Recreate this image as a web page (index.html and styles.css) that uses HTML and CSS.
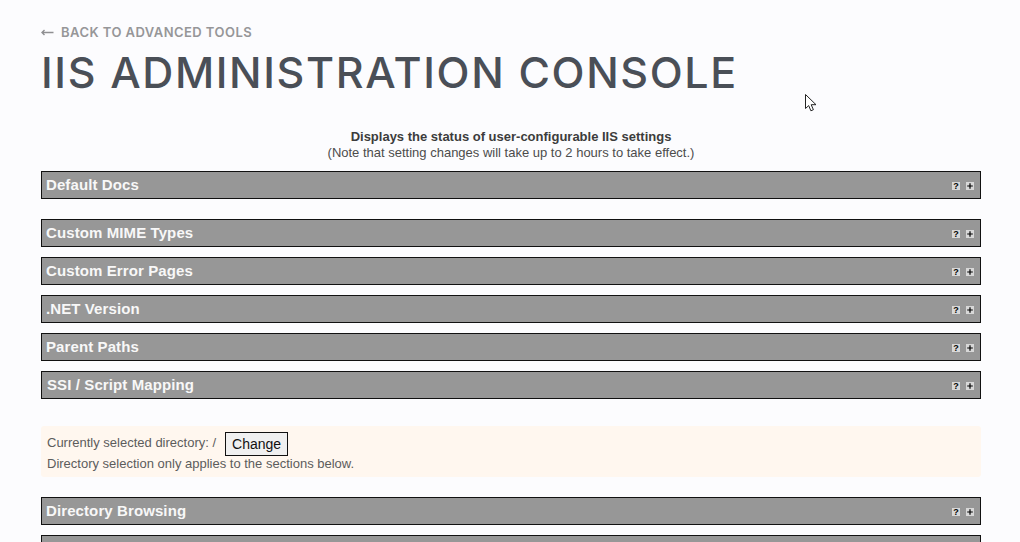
FILE: index.html
```html
<!DOCTYPE html>
<html lang="en">
<head>
<meta charset="utf-8">
<title>IIS Administration Console</title>
<link rel="stylesheet" href="styles.css">
</head>
<body>
<main class="page">
  <a class="back" href="#"><svg class="back-arrow" width="13" height="7" viewBox="0 0 13 7"><path d="M12.5 3.5H1M3.5 1 1 3.5 3.5 6" fill="none" stroke="#8f8f92" stroke-width="1.4"/></svg><span>BACK TO ADVANCED TOOLS</span></a>
  <h1 class="title">IIS ADMINISTRATION CONSOLE</h1>
  <div class="intro">
    <strong>Displays the status of user-configurable IIS settings</strong><br>
    (Note that setting changes will take up to 2 hours to take effect.)
  </div>
  <section class="bar bar-first"><span class="bar-title">Default Docs</span><span class="btns"><span class="btn">?</span><span class="btn btn-plus"><svg width="8" height="8" viewBox="0 0 8 8"><path d="M4 1.2V6.8M1.2 4H6.8" stroke="#000" stroke-width="1.2"/></svg></span></span></section>
  <div class="group">
    <section class="bar"><span class="bar-title">Custom MIME Types</span><span class="btns"><span class="btn">?</span><span class="btn btn-plus"><svg width="8" height="8" viewBox="0 0 8 8"><path d="M4 1.2V6.8M1.2 4H6.8" stroke="#000" stroke-width="1.2"/></svg></span></span></section>
    <section class="bar"><span class="bar-title">Custom Error Pages</span><span class="btns"><span class="btn">?</span><span class="btn btn-plus"><svg width="8" height="8" viewBox="0 0 8 8"><path d="M4 1.2V6.8M1.2 4H6.8" stroke="#000" stroke-width="1.2"/></svg></span></span></section>
    <section class="bar"><span class="bar-title">.NET Version</span><span class="btns"><span class="btn">?</span><span class="btn btn-plus"><svg width="8" height="8" viewBox="0 0 8 8"><path d="M4 1.2V6.8M1.2 4H6.8" stroke="#000" stroke-width="1.2"/></svg></span></span></section>
    <section class="bar"><span class="bar-title">Parent Paths</span><span class="btns"><span class="btn">?</span><span class="btn btn-plus"><svg width="8" height="8" viewBox="0 0 8 8"><path d="M4 1.2V6.8M1.2 4H6.8" stroke="#000" stroke-width="1.2"/></svg></span></span></section>
    <section class="bar"><span class="bar-title ssi">SSI / Script Mapping</span><span class="btns"><span class="btn">?</span><span class="btn btn-plus"><svg width="8" height="8" viewBox="0 0 8 8"><path d="M4 1.2V6.8M1.2 4H6.8" stroke="#000" stroke-width="1.2"/></svg></span></span></section>
  </div>
  <div class="dir">
    <div class="dir-line">Currently selected directory: /<button class="change" type="button">Change</button></div>
    <div class="dir-note">Directory selection only applies to the sections below.</div>
  </div>
  <div class="group">
    <section class="bar"><span class="bar-title">Directory Browsing</span><span class="btns"><span class="btn">?</span><span class="btn btn-plus"><svg width="8" height="8" viewBox="0 0 8 8"><path d="M4 1.2V6.8M1.2 4H6.8" stroke="#000" stroke-width="1.2"/></svg></span></span></section>
    <section class="bar"></section>
  </div>
</main>
<svg class="cursor" width="14" height="20" viewBox="0 0 14 20"><path d="M1.5 1.5V15.5L4.7 12.6 6.9 17.8 9.4 16.7 7.2 11.7H12Z" fill="#fff" stroke="#222" stroke-width="1"/></svg>
</body>
</html>
```
FILE: styles.css
```css
html, body { margin: 0; height: 542px; overflow: hidden; }
body { background: #fcfcfe; font-family: "Liberation Sans", Arial, sans-serif; color: #444; position: relative; }
.page { padding: 24px 39px 0 41px; }
.back { display: flex; align-items: center; gap: 7px; height: 16px; color: #969698; text-decoration: none; font-family: Inter, "Open Sans", sans-serif; font-size: 13px; font-weight: 600; }
.back span { letter-spacing: .45px; }
.title { margin: 10px 0 0; height: 44px; line-height: 44px; font-family: Inter, "Open Sans", sans-serif; font-size: 43px; font-weight: 550; letter-spacing: 1.62px; color: #4a4f57; white-space: nowrap; }
.intro { margin-top: 35px; text-align: center; font-size: 13px; line-height: 16px; color: #4c4c4c; }
.intro strong { color: #3c3c3c; }
.bar { box-sizing: border-box; height: 28px; background: #979797; border: 1px solid #111; display: flex; align-items: center; justify-content: space-between; padding: 0 6px 0 4px; }
.bar-first { margin-top: 10px; }
.bar-title { color: #f8f8f8; font-weight: 700; font-size: 15px; letter-spacing: .1px; margin-top: -2px; }
.ssi { margin-left: 1px; }
.btns { display: flex; gap: 6px; margin-top: 2px; }
.btn { width: 8px; height: 8px; background: #d8d8d8; color: #000; font-size: 9px; line-height: 8px; font-weight: 700; text-align: center; }
.btn-plus { display: flex; }
.group { display: flex; flex-direction: column; gap: 10px; margin-top: 20px; }
.dir { margin-top: 27px; height: 51px; box-sizing: border-box; padding: 5px 6px 0; background: #fff7ef; font-size: 13px; line-height: 16px; color: #5c5c5c; border-radius: 3px; }
.dir-line { display: flex; align-items: center; height: 24px; }
.dir-note { margin-top: 1px; }
.change { margin-left: 9px; margin-top: 1px; box-sizing: border-box; width: 63px; height: 24px; padding: 0; background: #f0f0f0; border: 1px solid #111; color: #111; font: 14px "Liberation Sans", Arial, sans-serif; }
.dir + .group { margin-top: 20px; }
.cursor { position: absolute; left: 804px; top: 93px; }
```
